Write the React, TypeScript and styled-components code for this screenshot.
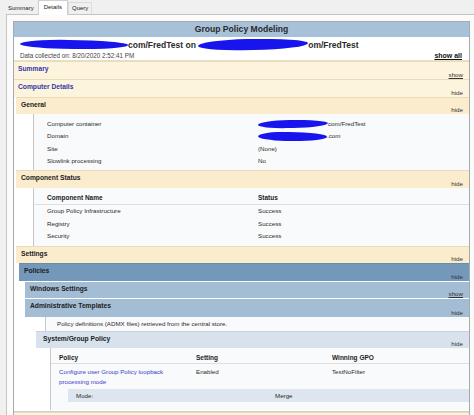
import React from "react"
import styled, { createGlobalStyle } from "styled-components"

type Tone = "top" | "sub" | "blue1" | "blue2" | "blue3"

const toneBg: Record<Tone, string> = {
  top: "#fdf4dd",
  sub: "#fbecce",
  blue1: "#7398ba",
  blue2: "#a3bdd4",
  blue3: "#d7e2ed"
}

const toneLine: Record<Tone, string> = {
  top: "#e9dcbd",
  sub: "#e9dcbd",
  blue1: "#6a8cab",
  blue2: "#ffffff",
  blue3: "#c9d3dd"
}

const GlobalStyle = createGlobalStyle`
  html, body {
    margin: 0;
    padding: 0;
  }
  body {
    background: #f0f0f0;
    font-family: "Liberation Sans", Arial, sans-serif;
    color: #222;
    overflow: hidden;
  }
`

const Window = styled.div`
  width: 474px;
  height: 415px;
  display: flex;
  flex-direction: column;
  overflow: hidden;
`

const TabStrip = styled.div`
  display: flex;
  align-items: flex-end;
  height: 14px;
  padding-left: 4px;
  flex-shrink: 0;
`

const Tab = styled.div<{ $active?: boolean; $boxed?: boolean }>`
  position: relative;
  font-size: 6px;
  color: #222;
  box-sizing: border-box;
  height: ${(p) => (p.$active ? 15 : 12)}px;
  line-height: ${(p) => (p.$active ? 13 : 11)}px;
  padding: 0 ${(p) => (p.$active ? 5 : 3)}px;
  margin-bottom: ${(p) => (p.$active ? -1 : 0)}px;
  background: ${(p) => (p.$active ? "#ffffff" : "#f0f0f0")};
  border: 1px solid
    ${(p) => (p.$active ? "#cfcfcf" : p.$boxed ? "#dcdcdc" : "transparent")};
  border-bottom: none;
  z-index: ${(p) => (p.$active ? 2 : 1)};
`

const Pane = styled.div`
  flex: 1;
  display: flex;
  margin-left: 6px;
  border-left: 1px solid #c4c4c4;
  border-top: 1px solid #c4c4c4;
  background: #fbfbfb;
  padding: 6px 4px 0 6px;
  min-height: 0;
`

const Report = styled.div`
  flex: 1;
  display: flex;
  flex-direction: column;
  border: 1px solid #a9a9a9;
  border-bottom: none;
  background: #ffffff;
  overflow: hidden;
`

const ReportHeader = styled.div`
  height: 15px;
  line-height: 15px;
  background: #a6c1d8;
  text-align: center;
  font-weight: bold;
  font-size: 8.6px;
  color: #2b2b2b;
  flex-shrink: 0;
`

const TitleBlock = styled.div`
  height: 24px;
  box-sizing: border-box;
  padding: 2px 7px 0 6px;
  border-bottom: 1px solid #e9dfc6;
  flex-shrink: 0;
`

const TitleLine = styled.div`
  display: flex;
  align-items: center;
  height: 11px;
  font-weight: bold;
  font-size: 8.5px;
  color: #2b2b2b;
  white-space: pre;
`

const Redact = styled.span<{ $w: number; $h?: number; $tilt?: number }>`
  display: inline-block;
  width: ${(p) => p.$w}px;
  height: ${(p) => p.$h ?? 9}px;
  background: #1714ee;
  border-radius: 45% 55% 50% 40% / 55% 45% 55% 45%;
  transform: rotate(${(p) => p.$tilt ?? 0}deg);
  flex-shrink: 0;
`

const DateRow = styled.div`
  display: flex;
  justify-content: space-between;
  align-items: flex-end;
  height: 10px;
`

const DateText = styled.span`
  font-size: 6.3px;
  color: #444;
  line-height: 8px;
`

const ShowAll = styled.span`
  font-size: 7px;
  font-weight: bold;
  color: #111;
  text-decoration: underline;
  line-height: 8px;
`

const Bar = styled.div<{ $tone: Tone; $indent: number; $h: number; $pad?: number }>`
  display: flex;
  justify-content: space-between;
  box-sizing: border-box;
  height: ${(p) => p.$h}px;
  margin-left: ${(p) => p.$indent}px;
  padding: 0 6px 0 ${(p) => p.$pad ?? 5}px;
  background: ${(p) => toneBg[p.$tone]};
  border-top: 1px solid ${(p) => toneLine[p.$tone]};
  flex-shrink: 0;
`

const BarTitle = styled.span<{ $blue?: boolean }>`
  font-weight: bold;
  font-size: 6.7px;
  line-height: 7px;
  padding-top: 3px;
  color: ${(p) => (p.$blue ? "#3434a8" : "#1c1c1c")};
`

const Toggle = styled.span<{ $show?: boolean }>`
  align-self: flex-end;
  font-size: 6.2px;
  line-height: 7px;
  padding-bottom: 1px;
  color: #333;
  text-decoration: ${(p) => (p.$show ? "underline" : "none")};
`

const Panel = styled.div<{ $indent: number; $top?: number; $bottom?: number }>`
  margin-left: ${(p) => p.$indent}px;
  border-left: 1px solid #c7c7c7;
  background: #f9fafb;
  padding-top: ${(p) => p.$top ?? 0}px;
  padding-bottom: ${(p) => p.$bottom ?? 0}px;
  font-size: 6.2px;
  color: #2a2a2a;
  flex-shrink: 0;
`

const InfoGrid = styled.div`
  display: grid;
  grid-template-columns: 211px 1fr;
  padding-left: 13px;
  line-height: 12.3px;
`

const Cell = styled.div`
  display: flex;
  align-items: center;
  white-space: nowrap;
`

const HeadRow = styled.div<{ $cols: string; $pad: number; $h: number }>`
  display: grid;
  grid-template-columns: ${(p) => p.$cols};
  padding-left: ${(p) => p.$pad}px;
  height: ${(p) => p.$h}px;
  line-height: ${(p) => p.$h}px;
  border-bottom: 1px solid #dcdfe3;
  font-weight: bold;
  font-size: 6.5px;
  color: #1c1c1c;
`

const BodyRows = styled.div<{ $cols: string; $pad: number; $lh: number; $top?: number }>`
  display: grid;
  grid-template-columns: ${(p) => p.$cols};
  padding-left: ${(p) => p.$pad}px;
  padding-top: ${(p) => p.$top ?? 0}px;
  line-height: ${(p) => p.$lh}px;
`

const Note = styled.div`
  padding-left: 11px;
  height: 14px;
  line-height: 14px;
`

const LinkText = styled.span`
  color: #3a3acb;
  padding-right: 16px;
`

const SubRow = styled.div`
  display: grid;
  grid-template-columns: 199px 1fr;
  margin: 2px 0 0 17px;
  height: 13px;
  line-height: 13px;
  padding-left: 8px;
  background: #dde5ee;
`

const SettingsBody = styled.div`
  border-bottom: 1px solid #cfcfcf;
  padding-bottom: 1px;
  background: #ffffff;
`

const NextStrip = styled.div`
  flex: 1;
  background: ${toneBg.top};
  border-top: 1px solid ${toneLine.top};
`

type Section = {
  title: string
  tone: Tone
  indent: number
  h: number
  pad?: number
  blue?: boolean
  show?: boolean
}

const SectionBar = ({ s }: { s: Section }) => (
  <Bar $tone={s.tone} $indent={s.indent} $h={s.h} $pad={s.pad}>
    <BarTitle $blue={s.blue}>{s.title}</BarTitle>
    <Toggle $show={s.show}>{s.show ? "show" : "hide"}</Toggle>
  </Bar>
)

const generalRows: [string, React.ReactNode][] = [
  [
    "Computer container",
    <>
      <Redact $w={70} $h={8} $tilt={-1} />
      com/FredTest
    </>
  ],
  [
    "Domain",
    <>
      <Redact $w={69} $h={9} $tilt={1} />
      .com
    </>
  ],
  ["Site", "(None)"],
  ["Slowlink processing", "No"]
]

const components = [
  ["Group Policy Infrastructure", "Success"],
  ["Registry", "Success"],
  ["Security", "Success"]
]

export default function App() {
  return (
    <>
      <GlobalStyle />
      <Window>
        <TabStrip>
          <Tab>Summary</Tab>
          <Tab $active>Details</Tab>
          <Tab $boxed>Query</Tab>
        </TabStrip>
        <Pane>
          <Report>
            <ReportHeader>Group Policy Modeling</ReportHeader>
            <TitleBlock>
              <TitleLine>
                <Redact $w={108} $h={9} $tilt={1} />
                {"com/FredTest on "}
                <Redact $w={110} $h={11} $tilt={-1} />
                om/FredTest
              </TitleLine>
              <DateRow>
                <DateText>Data collected on: 8/20/2020 2:52:41 PM</DateText>
                <ShowAll>show all</ShowAll>
              </DateRow>
            </TitleBlock>

            <SectionBar
              s={{ title: "Summary", tone: "top", indent: 0, h: 18, pad: 4, blue: true, show: true }}
            />
            <SectionBar
              s={{ title: "Computer Details", tone: "top", indent: 0, h: 18, pad: 4, blue: true }}
            />
            <SectionBar s={{ title: "General", tone: "sub", indent: 2, h: 17 }} />
            <Panel $indent={19} $top={4} $bottom={3}>
              <InfoGrid>
                {generalRows.map(([k, v]) => (
                  <React.Fragment key={k}>
                    <Cell>{k}</Cell>
                    <Cell>{v}</Cell>
                  </React.Fragment>
                ))}
              </InfoGrid>
            </Panel>

            <SectionBar s={{ title: "Component Status", tone: "sub", indent: 2, h: 18 }} />
            <Panel $indent={19} $top={4} $bottom={4}>
              <HeadRow $cols="211px 1fr" $pad={13} $h={12}>
                <span>Component Name</span>
                <span>Status</span>
              </HeadRow>
              <BodyRows $cols="211px 1fr" $pad={13} $lh={12.4}>
                {components.map(([n, st]) => (
                  <React.Fragment key={n}>
                    <span>{n}</span>
                    <span>{st}</span>
                  </React.Fragment>
                ))}
              </BodyRows>
            </Panel>

            <SectionBar s={{ title: "Settings", tone: "sub", indent: 2, h: 17 }} />
            <SettingsBody>
              <SectionBar s={{ title: "Policies", tone: "blue1", indent: 5, h: 18 }} />
              <SectionBar
                s={{ title: "Windows Settings", tone: "blue2", indent: 11, h: 17, show: true }}
              />
              <SectionBar
                s={{ title: "Administrative Templates", tone: "blue2", indent: 11, h: 19 }}
              />
              <Panel $indent={31}>
                <Note>Policy definitions (ADMX files) retrieved from the central store.</Note>
              </Panel>
              <SectionBar
                s={{ title: "System/Group Policy", tone: "blue3", indent: 22, h: 17, pad: 7 }}
              />
              <Panel $indent={36} $top={4} $bottom={8}>
                <HeadRow $cols="137px 136px 1fr" $pad={8} $h={11}>
                  <span>Policy</span>
                  <span>Setting</span>
                  <span>Winning GPO</span>
                </HeadRow>
                <BodyRows $cols="137px 136px 1fr" $pad={8} $lh={10} $top={3}>
                  <LinkText>Configure user Group Policy loopback processing mode</LinkText>
                  <span>Enabled</span>
                  <span>TestNoFilter</span>
                </BodyRows>
                <SubRow>
                  <span>Mode:</span>
                  <span>Merge</span>
                </SubRow>
              </Panel>
            </SettingsBody>
            <NextStrip />
          </Report>
        </Pane>
      </Window>
    </>
  )
}
